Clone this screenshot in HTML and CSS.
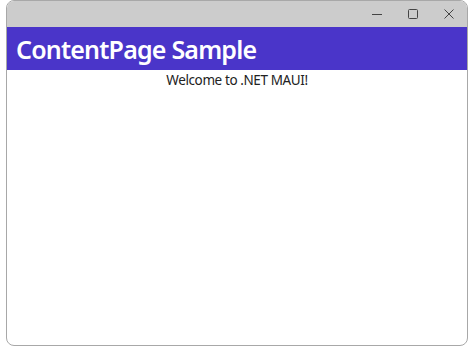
FILE: index.html
```html
<!DOCTYPE html>
<html lang="en">
<head>
  <meta charset="UTF-8">
  <title>ContentPage Sample</title>
  <link rel="stylesheet" href="styles.css">
</head>
<body>
  <div class="window">
    <div class="titlebar">
      <div class="caption-btn">
        <svg width="12" height="12" viewBox="0 0 12 12"><path d="M1 6.5h10" stroke="#444" stroke-width="1"/></svg>
      </div>
      <div class="caption-btn">
        <svg width="12" height="12" viewBox="0 0 12 12"><rect x="1.5" y="1.5" width="9" height="9" rx="1" fill="none" stroke="#444" stroke-width="1"/></svg>
      </div>
      <div class="caption-btn">
        <svg width="12" height="12" viewBox="0 0 12 12"><path d="M1.5 1.5l9 9M10.5 1.5l-9 9" stroke="#444" stroke-width="1"/></svg>
      </div>
    </div>
    <header class="navbar">
      <h1>ContentPage Sample</h1>
    </header>
    <main class="content">
      <p class="welcome">Welcome to .NET MAUI!</p>
    </main>
  </div>
</body>
</html>
```

FILE: styles.css
```css
html, body {
  margin: 0;
  background: #ffffff;
}

body {
  font-family: "Noto Sans", "Open Sans", sans-serif;
  padding: 0 6px;
  height: 352px;
  box-sizing: border-box;
}

.window {
  width: 462px;
  height: 346px;
  box-sizing: border-box;
  border: 1px solid #a8a8a8;
  border-radius: 8px;
  overflow: hidden;
  display: flex;
  flex-direction: column;
  background: #ffffff;
}

.titlebar {
  height: 26px;
  background: #cccccc;
  display: flex;
  justify-content: flex-end;
  align-items: center;
}

.caption-btn {
  width: 36px;
  height: 26px;
  display: flex;
  align-items: center;
  justify-content: center;
}

.navbar {
  height: 43px;
  background: #4a35c9;
  display: flex;
  align-items: center;
  padding-left: 9px;
}

.navbar h1 {
  margin: 0;
  color: #ffffff;
  font-size: 25px;
  font-weight: 600;
  letter-spacing: -0.8px;
}

.content {
  flex: 1;
}

.welcome {
  margin: 1px 0 0;
  text-align: center;
  font-size: 13.5px;
  letter-spacing: -0.4px;
  color: #222222;
}
```
